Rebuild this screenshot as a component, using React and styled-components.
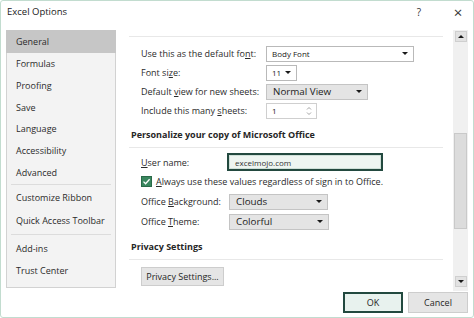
import React from 'react';
import styled, {createGlobalStyle} from 'styled-components';

const GlobalStyle = createGlobalStyle`
  html, body {
    margin: 0;
    padding: 0;
    background: #ffffff;
  }
  body {
    font-family: "Open Sans", "Noto Sans", sans-serif;
    color: #262626;
  }
`;

const Window = styled.div`
  width: 474px;
  height: 318px;
  box-sizing: border-box;
  border: 1px solid #c2dccf;
  border-radius: 3px;
  background: #ffffff;
  display: flex;
  flex-direction: column;
  overflow: hidden;
`;

const TitleBar = styled.div`
  height: 29px;
  flex: none;
  display: flex;
  align-items: flex-start;
  padding: 3px 0 0 6px;
  box-sizing: border-box;
  font-size: 9.5px;
  line-height: 16px;
  color: #1a1a1a;
`;

const Title = styled.span`
  flex: 1;
`;

const TitleButton = styled.span`
  width: 22px;
  text-align: center;
  font-size: ${p => p.$big ? '15px' : '10px'};
  line-height: 16px;
  color: #333;
  margin-right: ${p => p.$gap}px;
`;

const Body = styled.div`
  height: 261px;
  flex: none;
  display: flex;
`;

const Nav = styled.nav`
  margin-left: 5px;
  width: 110px;
  height: 258px;
  box-sizing: border-box;
  background: #f3f3f3;
  border: 1px solid #d2d2d2;
  display: flex;
  flex-direction: column;
  flex: none;
`;

const NavItem = styled.div`
  height: ${p => p.$h || 22}px;
  flex: none;
  display: flex;
  align-items: center;
  padding-left: 9px;
  font-size: 9px;
  color: #2b2b2b;
  background: ${p => p.$active ? '#c6c6c6' : 'transparent'};
  ${p => p.$first && 'margin-top: -1px; margin-left: -1px; margin-right: -1px; padding-left: 10px; height: 23px;'}
`;

const NavSeparator = styled.div`
  height: ${p => p.$h}px;
  flex: none;
  display: flex;
  align-items: center;
  padding: 0 4px;

  &::before {
    content: "";
    flex: 1;
    height: 1px;
    background: #dcdcdc;
  }
`;

const Main = styled.div`
  flex: 1;
  padding: 6px 10px 0 13px;
  display: flex;
  flex-direction: column;
  overflow: hidden;
`;

const Divider = styled.div`
  height: 1px;
  flex: none;
  background: #e8e8e8;
  margin-top: ${p => p.$mt || 0}px;
`;

const SectionTitle = styled.div`
  height: 16px;
  flex: none;
  line-height: 16px;
  margin-top: ${p => p.$mt}px;
  padding-left: 2px;
  font-size: 9px;
  font-weight: 700;
  color: #262626;
`;

const Row = styled.div`
  height: ${p => p.$h || 19}px;
  flex: none;
  display: flex;
  align-items: center;
  padding-left: 12px;
  margin-top: ${p => p.$mt || 0}px;
`;

const Label = styled.span`
  width: ${p => p.$w}px;
  flex: none;
  font-size: 9px;
  color: #2b2b2b;
  white-space: nowrap;

  u {
    text-decoration-thickness: 1px;
    text-underline-offset: 1px;
  }
`;

const Select = styled.div`
  width: ${p => p.$w}px;
  height: 16px;
  box-sizing: border-box;
  display: flex;
  align-items: center;
  justify-content: space-between;
  padding: 0 5px 0 ${p => p.$gray ? 6 : 5}px;
  border: 1px solid ${p => p.$gray ? '#c4c4c4' : '#b9b9b9'};
  background: ${p => p.$gray ? '#e4e4e4' : '#ffffff'};
  font-size: ${p => p.$gray ? '9.8px' : '8px'};
  color: #222;
`;

const Caret = styled.span`
  width: 0;
  height: 0;
  border-left: 3px solid transparent;
  border-right: 3px solid transparent;
  border-${p => p.$up ? 'bottom' : 'top'}: 3px solid #1a1a1a;
`;

const Spinner = styled.div`
  width: 51px;
  height: 16px;
  box-sizing: border-box;
  display: flex;
  align-items: center;
  justify-content: space-between;
  padding: 0 4px 0 5px;
  border: 1px solid #cfcfcf;
  font-size: 8px;
  color: #222;
`;

const SpinArrows = styled.svg`
  width: 6px;
  height: 12px;
`;

const TextInput = styled.div`
  width: 156px;
  height: 18px;
  box-sizing: border-box;
  display: flex;
  align-items: center;
  padding-left: 6px;
  border: 2px solid #23493f;
  box-shadow: inset 0 0 0 1px #cfe0d8;
  background: #eef5f1;
  font-size: 8px;
  color: #333;
`;

const CheckBox = styled.span`
  width: 11px;
  height: 11px;
  box-sizing: border-box;
  flex: none;
  display: flex;
  align-items: center;
  justify-content: center;
  background: #3a875f;
  border: 1px solid #2a6a49;
  margin-right: 4px;
`;

const Button = styled.div`
  width: ${p => p.$w}px;
  height: ${p => p.$h || 21}px;
  box-sizing: border-box;
  display: flex;
  align-items: center;
  justify-content: center;
  font-size: 9px;
  color: #262626;
  border: ${p => p.$primary ? '2px solid #22493f' : '1px solid #cdcdcd'};
  background: ${p => p.$primary ? '#e8f2ee' : '#e5e5e5'};
  margin-left: ${p => p.$ml || 0}px;
  margin-top: ${p => p.$mt || 0}px;
  flex: none;
`;

const Scrollbar = styled.div`
  width: 15px;
  margin-right: 5px;
  flex: none;
  background: #f0f0f0;
  display: flex;
  flex-direction: column;
  align-items: center;
`;

const ScrollButton = styled.div`
  width: 12px;
  height: 11px;
  box-sizing: border-box;
  display: flex;
  align-items: center;
  justify-content: center;
  background: #e2e2e2;
  border: 1px solid #cfcfcf;
  margin-top: ${p => p.$mt};
  margin-bottom: ${p => p.$mb || 0}px;
`;

const Thumb = styled.div`
  width: 13px;
  height: 96px;
  box-sizing: border-box;
  background: #dcdcdc;
  border: 1px solid #c9c9c9;
  margin-top: 91px;
`;

const Footer = styled.div`
  flex: 1;
  display: flex;
  justify-content: flex-end;
  align-items: flex-start;
  padding-right: 5px;
`;

const navTop = ['Formulas', 'Proofing', 'Save', 'Language', 'Accessibility', 'Advanced'];

export default function App() {
    return (
        <>
            <GlobalStyle/>
            <Window>
                <TitleBar>
                    <Title>Excel Options</Title>
                    <TitleButton $gap={17}>?</TitleButton>
                    <TitleButton $big $gap={4}>×</TitleButton>
                </TitleBar>
                <Body>
                    <Nav>
                        <NavItem $active $first>General</NavItem>
                        {navTop.map(n => <NavItem key={n} $h={21.7}>{n}</NavItem>)}
                        <NavSeparator $h={3}/>
                        <NavItem $h={23}>Customize Ribbon</NavItem>
                        <NavItem $h={23}>Quick Access Toolbar</NavItem>
                        <NavSeparator $h={5}/>
                        <NavItem>Add-ins</NavItem>
                        <NavItem>Trust Center</NavItem>
                    </Nav>
                    <Main>
                        <Divider/>
                        <Row $mt={7}>
                            <Label $w={125}>Use this as the default fo<u>n</u>t:</Label>
                            <Select $w={148}>Body Font<Caret/></Select>
                        </Row>
                        <Row>
                            <Label $w={125}>Font si<u>z</u>e:</Label>
                            <Select $w={31}>11<Caret/></Select>
                        </Row>
                        <Row>
                            <Label $w={125}>Default <u>v</u>iew for new sheets:</Label>
                            <Select $w={102} $gray>Normal View<Caret/></Select>
                        </Row>
                        <Row>
                            <Label $w={125}>Include this many <u>s</u>heets:</Label>
                            <Spinner>
                                1
                                <SpinArrows viewBox="0 0 6 12">
                                    <path d="M1 4.5 L3 2.5 L5 4.5 M1 7.5 L3 9.5 L5 7.5" fill="none" stroke="#8a8a8a" strokeWidth="0.8"/>
                                </SpinArrows>
                            </Spinner>
                        </Row>
                        <SectionTitle $mt={7}>Personalize your copy of Microsoft Office</SectionTitle>
                        <Divider $mt={4}/>
                        <Row $h={18} $mt={5}>
                            <Label $w={86}><u>U</u>ser name:</Label>
                            <TextInput>excelmojo.com</TextInput>
                        </Row>
                        <Row $h={18} $mt={1}>
                            <CheckBox>
                                <svg width="9" height="9" viewBox="0 0 9 9">
                                    <path d="M1.5 4.6 L3.6 6.7 L7.6 2.2" fill="none" stroke="#ffffff" strokeWidth="1.3"/>
                                </svg>
                            </CheckBox>
                            <Label><u>A</u>lways use these values regardless of sign in to Office.</Label>
                        </Row>
                        <Row $mt={2}>
                            <Label $w={88}>Office <u>B</u>ackground:</Label>
                            <Select $w={99} $gray>Clouds<Caret/></Select>
                        </Row>
                        <Row $mt={1}>
                            <Label $w={88}>Office <u>T</u>heme:</Label>
                            <Select $w={100} $gray>Colorful<Caret/></Select>
                        </Row>
                        <SectionTitle $mt={8}>Privacy Settings</SectionTitle>
                        <Divider $mt={4}/>
                        <Row $mt={7} $h={19}>
                            <Button $w={83} $h={19}>Privacy Settings...</Button>
                        </Row>
                    </Main>
                    <Scrollbar>
                        <ScrollButton $mt="1px"><Caret $up/></ScrollButton>
                        <Thumb/>
                        <ScrollButton $mt="auto" $mb={4}><Caret/></ScrollButton>
                    </Scrollbar>
                </Body>
                <Footer>
                    <Button $primary $w={60} $mt={1}>OK</Button>
                    <Button $w={60} $ml={5} $mt={1}>Cancel</Button>
                </Footer>
            </Window>
        </>
    );
}
